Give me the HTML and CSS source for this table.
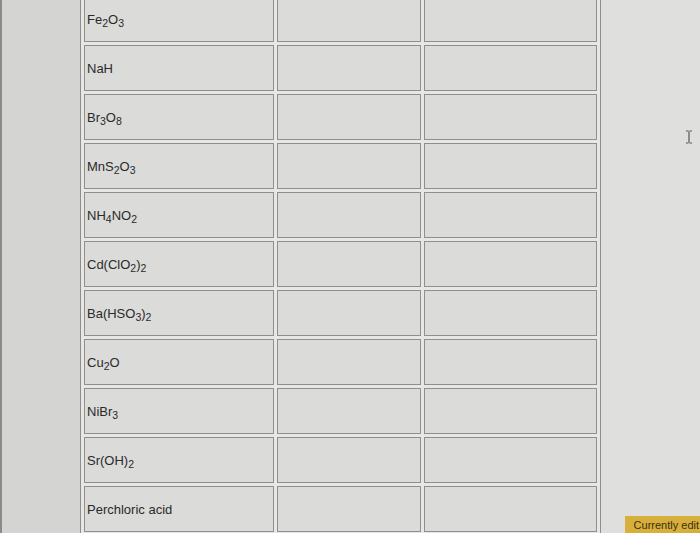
FILE: index.html
```html
<!DOCTYPE html>
<html lang="en">
<head>
<meta charset="utf-8">
<title>Compounds</title>
<link rel="stylesheet" href="styles.css">
</head>
<body>
<div class="page">
  <div class="gutter"></div>
  <div class="sheet">
    <table class="grid">
      <colgroup><col class="c1"><col class="c2"><col class="c3"></colgroup>
      <tbody>
        <tr><td class="name">Fe<sub>2</sub>O<sub>3</sub></td><td></td><td></td></tr>
        <tr><td class="name">NaH</td><td></td><td></td></tr>
        <tr><td class="name">Br<sub>3</sub>O<sub>8</sub></td><td></td><td></td></tr>
        <tr><td class="name">MnS<sub>2</sub>O<sub>3</sub></td><td></td><td></td></tr>
        <tr><td class="name">NH<sub>4</sub>NO<sub>2</sub></td><td></td><td></td></tr>
        <tr><td class="name">Cd(ClO<sub>2</sub>)<sub>2</sub></td><td></td><td></td></tr>
        <tr><td class="name">Ba(HSO<sub>3</sub>)<sub>2</sub></td><td></td><td></td></tr>
        <tr><td class="name">Cu<sub>2</sub>O</td><td></td><td></td></tr>
        <tr><td class="name">NiBr<sub>3</sub></td><td></td><td></td></tr>
        <tr><td class="name">Sr(OH)<sub>2</sub></td><td></td><td></td></tr>
        <tr><td class="name">Perchloric acid</td><td></td><td></td></tr>
      </tbody>
    </table>
  </div>
  <div class="aside"></div>
  <svg class="ibeam" width="8" height="14" viewBox="0 0 8 14" aria-hidden="true">
    <path d="M1 1h2.5M4.5 1H7M4 1.5v11M1 13h2.5M4.5 13H7" stroke="#555" stroke-width="1.2" fill="none"/>
  </svg>
  <div class="badge">Currently edit</div>
</div>
</body>
</html>
```

FILE: styles.css
```css
html, body {
  margin: 0;
  padding: 0;
}
body {
  background: #dddddb;
  font-family: "Liberation Sans", Arial, sans-serif;
  overflow: hidden;
}
.page {
  position: relative;
  display: flex;
  width: 700px;
  height: 533px;
  overflow: hidden;
}
.gutter {
  width: 78px;
  flex: none;
  background: #d4d4d2;
  border-left: 2px solid #8a8a88;
}
.sheet {
  flex: none;
  margin-top: -8px;
}
.aside {
  flex: 1;
  background: #dfdfdd;
}
.grid {
  table-layout: fixed;
  border-collapse: separate;
  border-spacing: 3px;
  border: 1px solid #8d8d8b;
  background: #e7e7e5;
}
.grid col.c1 { width: 190px; }
.grid col.c2 { width: 144px; }
.grid col.c3 { width: 173px; }
.grid td {
  box-sizing: border-box;
  height: 46px;
  padding: 0 0 0 2px;
  border: 1px solid #8f8f8d;
  background: #dbdbd9;
  vertical-align: middle;
  font-size: 13px;
  color: #2a2a2a;
  white-space: nowrap;
}
.grid sub {
  font-size: 10.5px;
  vertical-align: -3px;
  line-height: 0;
}
.ibeam {
  position: absolute;
  left: 685px;
  top: 130px;
}
.badge {
  position: absolute;
  right: 0;
  top: 516px;
  height: 20px;
  padding: 3px 1px 0 9px;
  box-sizing: border-box;
  background: #d7b03c;
  color: #3a2e10;
  font-size: 11px;
  white-space: nowrap;
}
```
